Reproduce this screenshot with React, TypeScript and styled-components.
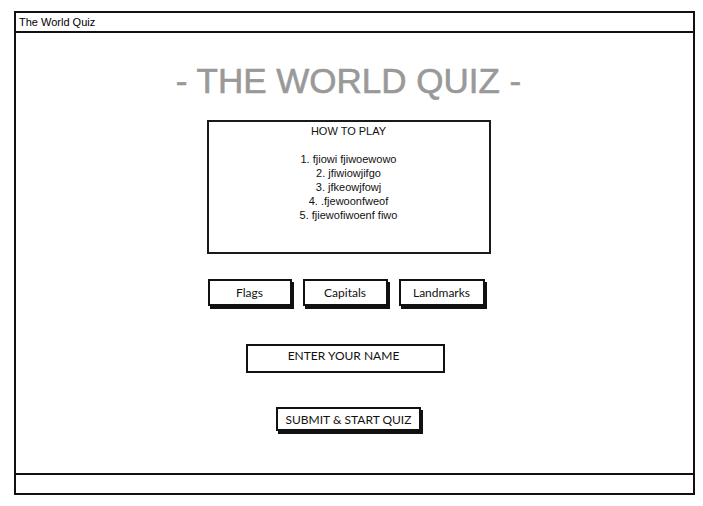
import React from 'react';
import styled, { createGlobalStyle } from 'styled-components';

const GlobalStyle = createGlobalStyle`
	html, body {
		margin: 0;
		padding: 0;
		background: #fff;
	}
	* {
		box-sizing: border-box;
	}
`;

const Page = styled.div`
	width: 703px;
	height: 506px;
	padding: 11px 0 0 14px;
	background: #fff;
`;

const Window = styled.div`
	width: 681px;
	height: 484px;
	border: 2px solid #111;
	display: flex;
	flex-direction: column;
`;

const TitleBar = styled.div`
	height: 20px;
	border-bottom: 2px solid #111;
	padding: 1px 0 0 3px;
	font-family: 'Liberation Sans', Arial, sans-serif;
	font-size: 11px;
	line-height: 16px;
	color: #000;
`;

const Content = styled.main`
	flex: 1;
	display: flex;
	flex-direction: column;
	align-items: center;
	padding: 30px 12px 0 0;
`;

const Heading = styled.h1`
	margin: 0;
	font-family: 'Liberation Sans', Arial, sans-serif;
	font-weight: normal;
	font-size: 35px;
	line-height: 35px;
	color: #999;
	-webkit-text-stroke: 0.6px #999;
`;

const HowToBox = styled.section`
	margin-top: 22px;
	width: 284px;
	height: 134px;
	border: 2px solid #1a1a1a;
	padding-top: 2px;
	text-align: center;
	font-family: 'Liberation Sans', Arial, sans-serif;
	font-size: 11px;
	line-height: 14px;
	color: #111;
`;

const HowToTitle = styled.div`
	margin-bottom: 14px;
`;

const Steps = styled.ol`
	margin: 0;
	padding: 0;
	list-style: none;
`;

const ModeRow = styled.div`
	margin-top: 25px;
	display: flex;
	gap: 11px;
	padding-right: 5px;
`;

const SketchButton = styled.button<{ $w: number; $h: number }>`
	width: ${(p) => p.$w}px;
	height: ${(p) => p.$h}px;
	border: 2px solid #111;
	background: #fff;
	box-shadow: 2px 3px 0 #111;
	font-family: Lato, 'Open Sans', sans-serif;
	font-size: 12px;
	color: #111;
	padding: 0;
	cursor: pointer;
`;

const NameField = styled.div`
	margin-top: 38px;
	width: 199px;
	height: 29px;
	border: 2px solid #111;
	padding-top: 3px;
	padding-right: 4px;
	text-align: center;
	font-family: Lato, 'Open Sans', sans-serif;
	font-size: 12px;
	line-height: 14px;
	color: #111;
	margin-right: 6px;
`;

const SubmitWrap = styled.div`
	margin-top: 34px;
`;

const Footer = styled.footer`
	height: 20px;
	border-top: 2px solid #111;
`;

const steps = [
	'1. fjiowi fjiwoewowo',
	'2. jfiwiowjifgo',
	'3. jfkeowjfowj',
	'4. .fjewoonfweof',
	'5. fjiewofiwoenf fiwo',
];

const modes = [
	{ label: 'Flags', w: 84 },
	{ label: 'Capitals', w: 85 },
	{ label: 'Landmarks', w: 86 },
];

export default function App() {
	return (
		<>
			<GlobalStyle />
			<Page>
				<Window>
					<TitleBar>The World Quiz</TitleBar>
					<Content>
						<Heading>- THE WORLD QUIZ -</Heading>
						<HowToBox>
							<HowToTitle>HOW TO PLAY</HowToTitle>
							<Steps>
								{steps.map((s) => (
									<li key={s}>{s}</li>
								))}
							</Steps>
						</HowToBox>
						<ModeRow>
							{modes.map((m) => (
								<SketchButton key={m.label} $w={m.w} $h={27}>
									{m.label}
								</SketchButton>
							))}
						</ModeRow>
						<NameField>ENTER YOUR NAME</NameField>
						<SubmitWrap>
							<SketchButton $w={145} $h={24}>
								SUBMIT &amp; START QUIZ
							</SketchButton>
						</SubmitWrap>
					</Content>
					<Footer />
				</Window>
			</Page>
		</>
	);
}
